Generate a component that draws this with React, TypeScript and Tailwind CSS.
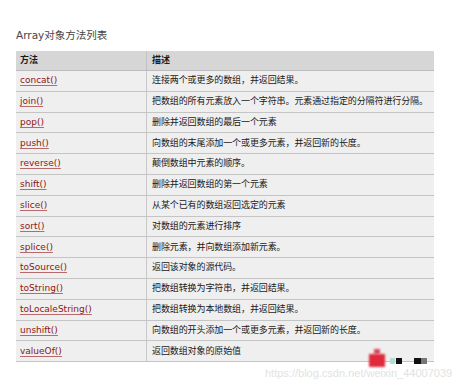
import React from 'react';

const rows: [string, string][] = [
  ['concat()', '连接两个或更多的数组，并返回结果。'],
  ['join()', '把数组的所有元素放入一个字符串。元素通过指定的分隔符进行分隔。'],
  ['pop()', '删除并返回数组的最后一个元素'],
  ['push()', '向数组的末尾添加一个或更多元素，并返回新的长度。'],
  ['reverse()', '颠倒数组中元素的顺序。'],
  ['shift()', '删除并返回数组的第一个元素'],
  ['slice()', '从某个已有的数组返回选定的元素'],
  ['sort()', '对数组的元素进行排序'],
  ['splice()', '删除元素，并向数组添加新元素。'],
  ['toSource()', '返回该对象的源代码。'],
  ['toString()', '把数组转换为字符串，并返回结果。'],
  ['toLocaleString()', '把数组转换为本地数组，并返回结果。'],
  ['unshift()', '向数组的开头添加一个或更多元素，并返回新的长度。'],
  ['valueOf()', '返回数组对象的原始值'],
];

const font = "font-['DejaVu_Sans','Noto_Sans_CJK_SC',sans-serif]";

const App: React.FC = () => {
  return (
    <div className={`w-[474px] h-[388px] bg-white relative overflow-hidden ${font}`}>
      <div className="pl-4 pt-[28px]">
        <h1 className="text-[10.5px] leading-[14px] text-[#444]">Array对象方法列表</h1>

        <div className="mt-[9px] w-[418px] text-[9px] text-[#1a1a1a]">
          {/* header */}
          <div className="flex h-[20px] bg-[#d6d6d6] border-b border-[#bcbcbc] font-bold">
            <div className="w-[131px] pl-1 flex items-center border-r border-[#c2c2c2]">方法</div>
            <div className="flex-1 pl-[5px] flex items-center">描述</div>
          </div>

          {rows.map(([name, desc]) => (
            <div key={name} className="flex h-[20.8px] bg-[#efefef] border-b border-[#c4c4c4]">
              <div className="w-[131px] pl-1 flex items-center border-r border-[#c8c8c8]">
                <span className="text-[#8c1414] underline decoration-[#b86a6a] underline-offset-2">{name}</span>
              </div>
              <div className="flex-1 pl-[5px] flex items-center whitespace-nowrap tracking-[-0.1px]">{desc}</div>
            </div>
          ))}
        </div>
      </div>

      {/* blog watermark, lies over the table corner */}
      <div className="absolute left-[265px] top-[349px] flex flex-col items-start">
        <div className="ml-[104px] flex items-end gap-[5px]">
          <div className="flex flex-col items-center">
            <div className="w-[6px] h-[5px] bg-[#d44a5a] blur-[1px]" />
            <div className="w-[16px] h-[13px] bg-[#e0293a] blur-[1px]" />
          </div>
          <div className="flex mb-[3px]">
            <div className="w-[5px] h-[6px] bg-[#b8dcd0]" />
            <div className="ml-[1px] w-[6px] h-[6px] bg-[#111]" />
          </div>
          <div className="flex mb-[3px] ml-[7px]">
            <div className="w-[7px] h-[6px] bg-[#111]" />
            <div className="w-[6px] h-[6px] bg-[#777]" />
          </div>
        </div>
        <div className="-mt-[2px] text-[11px] text-[#e2e2e2] font-['Liberation_Sans',sans-serif] whitespace-nowrap">
          https://blog.csdn.net/weixin_44007039
        </div>
      </div>
    </div>
  );
};

export default App;
